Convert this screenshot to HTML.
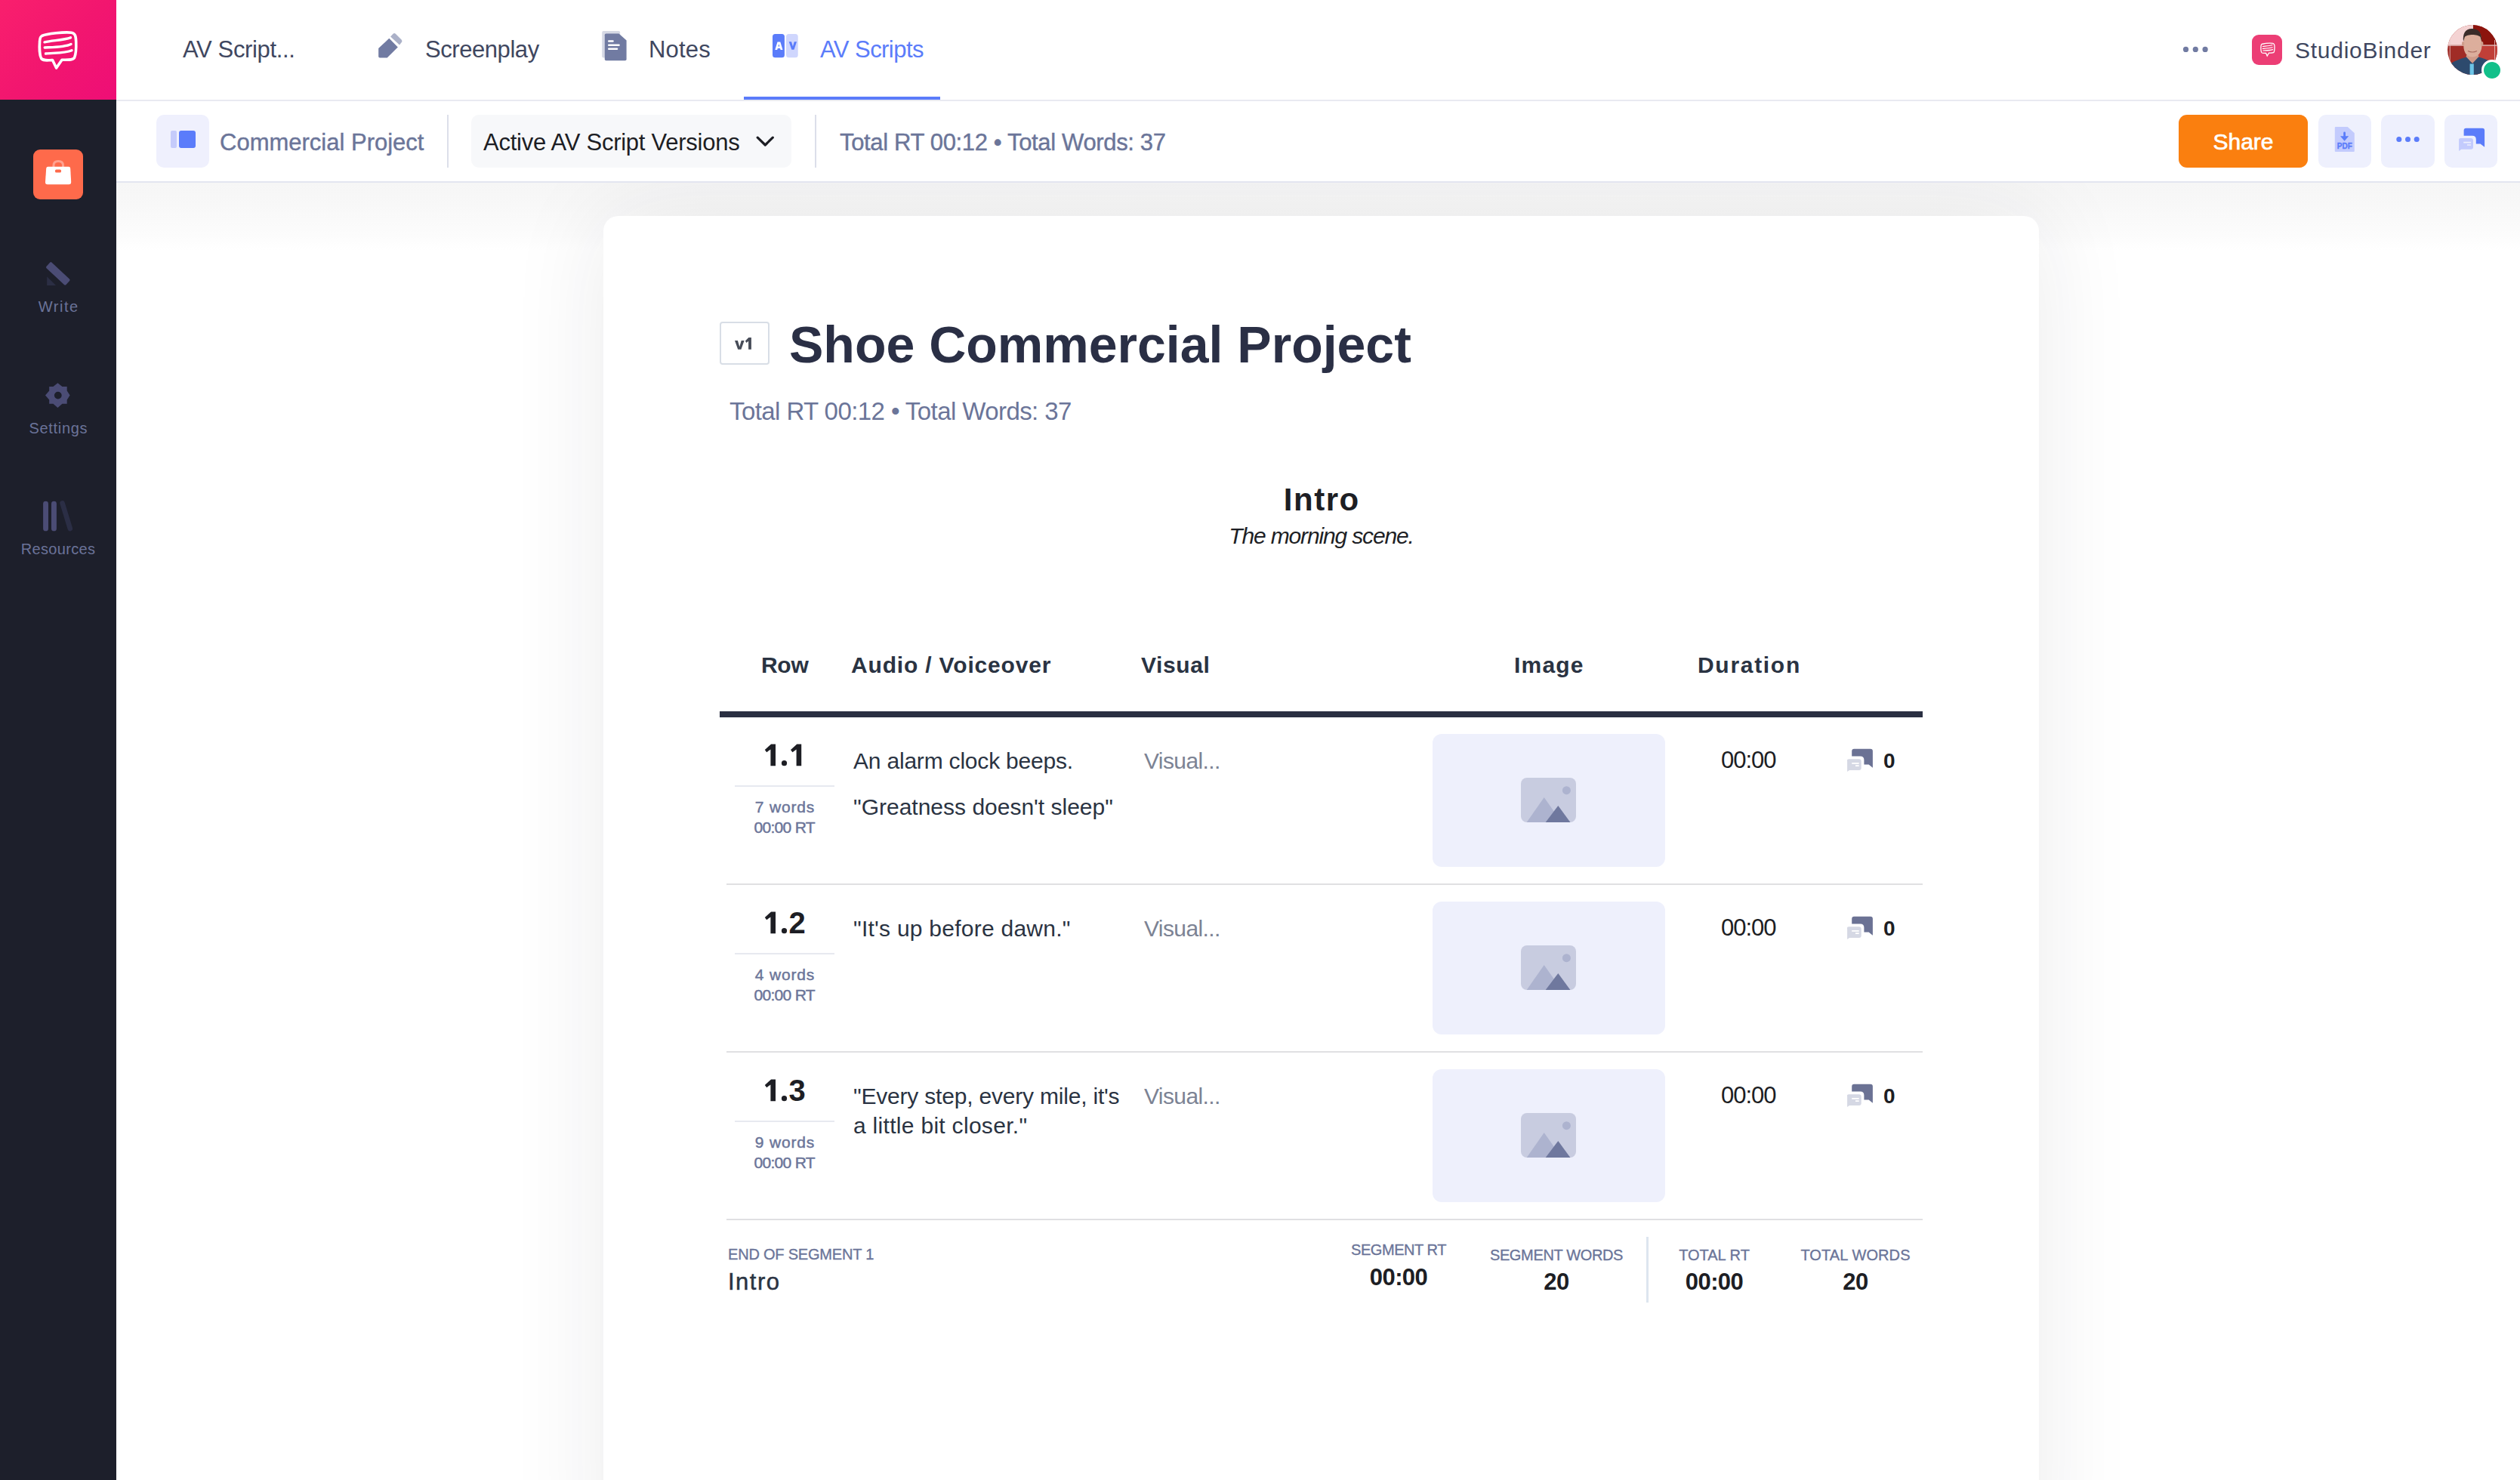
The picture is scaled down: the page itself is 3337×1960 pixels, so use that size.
<!DOCTYPE html>
<html><head><meta charset="utf-8">
<style>
*{margin:0;padding:0;box-sizing:border-box}
html,body{width:3337px;height:1960px;overflow:hidden;background:#fff;font-family:"Liberation Sans",sans-serif}
.a{position:absolute}
.t{position:absolute;white-space:nowrap;line-height:1}
svg{position:absolute;overflow:visible}
#side{left:0;top:0;width:154px;height:1960px;background:#1d1f2b}
#logo{left:0;top:0;width:154px;height:132px;background:linear-gradient(135deg,#f91f6d 0%,#f2166f 50%,#ee0e76 100%)}
.sl{color:#6b7399;font-size:20px;left:0;width:154px;text-align:center}
#top{left:154px;top:0;width:3183px;height:134px;background:#fff;border-bottom:2px solid #e9eaf1}
#bar{left:154px;top:134px;width:3183px;height:108px;background:#fff;border-bottom:2px solid #e3e5f0}
.nav{font-size:31px;color:#3f4760}
.sq{border-radius:10px;background:#eef0fd}
#main{left:154px;top:242px;width:3183px;height:1718px;background:linear-gradient(#f6f6f6 0px,#f8f8f8 30px,#fcfcfc 70px,#fff 90px)}
#card{left:799px;top:286px;width:1901px;height:1800px;background:#fff;border-radius:20px;box-shadow:0 0 130px rgba(30,30,40,0.09)}
.hd{font-size:30px;font-weight:bold;color:#2a3342;letter-spacing:1.2px}
.num{font-size:40px;font-weight:bold;color:#1d1e24;letter-spacing:-1.5px;text-indent:-1.5px}
.wd{font-size:21px;letter-spacing:0.3px;-webkit-text-stroke:0.45px #6b7599;color:#6b7599;width:132px;text-align:center;left:973px}
.au{font-size:30px;color:#2a3342}
.vi{font-size:30px;color:#7c8394;letter-spacing:-0.6px}
.imgbox{left:1897px;width:308px;height:176px;border-radius:12px;background:#eef0fc}
.du{font-size:31px;color:#1d1e24;letter-spacing:-1px}
.zero{font-size:28px;font-weight:bold;color:#1d1e24}
.rdiv{left:962px;width:1584px;height:2px;background:#e0e0e2}
.ndiv{left:973px;width:132px;height:2px;background:#e7e9f0}
.ft{font-size:20px;color:#6b7599;letter-spacing:-0.2px;-webkit-text-stroke:0.35px #6b7599}
.fv{font-size:31px;font-weight:bold;color:#1d1e24;letter-spacing:-0.6px}
</style></head><body>

<!-- MAIN -->
<div id="main" class="a"></div>
<div id="card" class="a"></div>

<!-- SIDEBAR -->
<div id="side" class="a"></div>
<div id="logo" class="a"></div>
<svg style="left:0;top:0" width="154" height="132" viewBox="0 0 154 132">
 <path d="M55.5,47.5 C62,44.5 86,42 94.5,43.2 C99.5,44 100.5,48 100.7,55 C101,63 100.5,72 98.5,76.5 C96.5,79.5 90,79.5 82,79.2 L74.6,90 L69.5,79.5 C62,80 56.5,80.5 54.5,77 C52.5,73 52,62 52.6,54.5 C52.8,50.5 53.5,48.5 55.5,47.5 Z" fill="none" stroke="#fff" stroke-width="3.6" stroke-linejoin="round"/>
 <path d="M59,55.8 C70,53.5 85,53 93.5,49.8" fill="none" stroke="#fff" stroke-width="3.4" stroke-linecap="round"/>
 <path d="M59.2,63 C70,62.5 86,62.5 94,58.5" fill="none" stroke="#fff" stroke-width="3.4" stroke-linecap="round"/>
 <path d="M60.5,71 C71,70 87,70.5 95,66.8" fill="none" stroke="#fff" stroke-width="3.4" stroke-linecap="round"/>
</svg>
<div class="a" style="left:44px;top:198px;width:66px;height:66px;border-radius:9px;background:#fe6a4b"></div>
<svg style="left:0;top:190px" width="154" height="80" viewBox="0 190 154 80">
 <path d="M71,221.5 V219 Q71,213.5 77.2,213.5 Q83.5,213.5 83.5,219 V221.5" fill="none" stroke="#ffa18f" stroke-width="3"/>
 <path d="M63.5,220.8 H91 Q93,220.8 93.2,223 L94.2,241 Q94.3,244.2 91,244.2 H63 Q59.8,244.2 60,241 L61.2,223 Q61.5,220.8 63.5,220.8 Z" fill="#fff"/>
 <rect x="73" y="224.6" width="8" height="4" rx="1.5" fill="#fe6a4b"/>
</svg>
<svg style="left:0;top:330px" width="154" height="60" viewBox="0 330 154 60">
 <rect x="59" y="357.2" width="35.5" height="10.3" rx="1.8" transform="rotate(43 76.8 362.4)" fill="#4b4c75"/>
 <path d="M62.2,366.2 V378 H74 Z" fill="#2b2e44"/>
</svg>
<div class="t sl" style="top:396px;letter-spacing:1.5px;text-indent:1.5px">Write</div>
<svg style="left:0;top:500px" width="154" height="50" viewBox="0 500 154 50">
 <path d="M76.4,507.2 L82.4,512 H88.7 V517.5 L92.6,523.5 L88.7,529.5 V534.8 H82.4 L76.4,540 L70.5,534.8 H65.2 V529.5 L60,523.5 L65.2,517.5 V512 H70.5 Z M76.8,518.7 A4.9,4.9 0 1 0 76.8,528.5 A4.9,4.9 0 1 0 76.8,518.7 Z" fill="#4b4c75" fill-rule="evenodd"/>
</svg>
<div class="t sl" style="top:557px;letter-spacing:0.7px;text-indent:0.7px">Settings</div>
<svg style="left:0;top:655px" width="154" height="55" viewBox="0 655 154 55">
 <rect x="57.1" y="663.8" width="6.9" height="39.5" rx="3.4" fill="#4b4c75"/>
 <rect x="68" y="663.8" width="6.9" height="39.5" rx="3.4" fill="#4b4c75"/>
 <path d="M82.6,666.4 L92.8,700" stroke="#2b2e45" stroke-width="6.6" stroke-linecap="round"/>
</svg>
<div class="t sl" style="top:717px;letter-spacing:0.35px">Resources</div>

<!-- TOP NAV -->
<div id="top" class="a"></div>
<div class="t nav" style="left:242px;top:50px;letter-spacing:-0.36px">AV Script...</div>
<svg style="left:490px;top:35px" width="60" height="60" viewBox="490 35 60 60">
 <path d="M501.2,64 L515.3,50.8 L526.8,62.5 L512.7,76.6 H503 Q501.2,76.6 501.2,74.8 Z" fill="#717ba2"/>
 <path d="M517.1,48.4 L520.6,44.8 Q522.2,43.4 523.8,44.8 L531.8,52.8 Q533.2,54.5 531.8,56.1 L529,59.6 Z" fill="#abb1c8"/>
</svg>
<div class="t nav" style="left:563px;top:50px;letter-spacing:-0.44px">Screenplay</div>
<svg style="left:790px;top:35px" width="50" height="50" viewBox="790 35 50 50">
 <rect x="797.2" y="41" width="24" height="35.6" rx="2" fill="#d6d9e5"/>
 <path d="M802.6,44.4 H819.5 L829.6,53.6 V78.5 Q829.6,80.3 827.8,80.3 H802.6 Q800.8,80.3 800.8,78.5 V46.2 Q800.8,44.4 802.6,44.4 Z" fill="#717ba2"/>
 <path d="M806.3,54.5 H811.5 M806.3,59.8 H819.5 M806.3,64.8 H817" stroke="#fff" stroke-width="2.6" stroke-linecap="round"/>
</svg>
<div class="t nav" style="left:859px;top:50px;letter-spacing:0.2px">Notes</div>
<svg style="left:1015px;top:40px" width="50" height="45" viewBox="1015 40 50 45">
 <rect x="1023" y="44.9" width="15.9" height="31.4" rx="3.5" fill="#5b7cfa"/>
 <rect x="1041" y="44.9" width="15.7" height="31.4" rx="3.5" fill="#cfd6fd"/>
 <path d="M1026.3,66 L1029.5,55.5 H1033.3 L1036.5,66 H1033.6 L1033,64 H1029.8 L1029.2,66 Z M1030.4,61.5 H1032.4 L1031.4,58.2 Z" fill="#fff" fill-rule="evenodd"/>
 <path d="M1044.7,55.2 H1048 L1049.9,61.5 L1051.8,55.2 H1055 L1051.5,65.8 H1048.3 Z" fill="#5b7cfa"/>
</svg>
<div class="t nav" style="left:1086px;top:50px;color:#5b7cfa;letter-spacing:-0.55px">AV Scripts</div>
<div class="a" style="left:985px;top:128px;width:260px;height:4px;background:#5b7cfa"></div>

<svg style="left:2880px;top:55px" width="50" height="20" viewBox="2880 55 50 20">
 <circle cx="2894.5" cy="65.4" r="3.6" fill="#717ba2"/><circle cx="2907.3" cy="65.4" r="3.6" fill="#717ba2"/><circle cx="2920.1" cy="65.4" r="3.6" fill="#717ba2"/>
</svg>
<div class="a" style="left:2982px;top:46px;width:40px;height:40px;border-radius:9px;background:#ec3e75"></div>
<svg style="left:2982px;top:46px" width="40" height="40" viewBox="0 0 40 40">
 <path d="M13,12.5 C17,11.5 24,11 27.5,11.3 C29.5,11.5 30,13 30,16 C30,19 29.8,22 29,23.3 C28,24.3 25.5,24.3 22.5,24.2 L20.2,28 L18.5,24.3 C16,24.5 13.5,24.5 12.8,23.5 C12,22 11.8,18 12,15.3 C12.1,13.5 12.3,12.8 13,12.5 Z" fill="none" stroke="#fff" stroke-width="1.3"/>
 <path d="M14.3,15.5 C18,15 23,15 27,13.5 M14.3,18.3 C18,18.2 23,18.2 27.2,16.8 M14.8,21 C18.5,20.8 23.5,21 27.5,19.6" stroke="#fff" stroke-width="1.2" fill="none" stroke-linecap="round"/>
</svg>
<div class="t" style="left:3039px;top:51.5px;font-size:30px;color:#3f4760;letter-spacing:0.73px">StudioBinder</div>
<svg style="left:3241px;top:33px" width="66" height="66" viewBox="0 0 66 66">
 <defs><clipPath id="avc"><circle cx="33" cy="33" r="33"/></clipPath></defs>
 <g clip-path="url(#avc)">
  <rect x="0" y="0" width="66" height="66" fill="#a02c26"/>
  <rect x="0" y="0" width="33" height="26.5" fill="#f4d3d3"/>
  <rect x="33.8" y="0" width="33" height="26.5" fill="#8c140d"/>
  <rect x="33.8" y="27.6" width="33" height="40" fill="#c03f38"/>
  <rect x="33" y="0" width="0.9" height="66" fill="#f0e0e0"/>
  <rect x="0" y="26.5" width="66" height="1.1" fill="#f0e0e0"/>
  <rect x="2.8" y="20" width="0.8" height="40" fill="#e8c8c8"/>
  <rect x="62" y="20" width="0.8" height="40" fill="#e8c8c8"/>
  <path d="M25,40 L41,40 L43,50 L24,50 Z" fill="#cf9a88"/>
  <path d="M21.5,20 C21,12 24,6.5 32.5,6 C41,6 45,11 45,20 L45.5,28 C45,37 40,42.5 33,42.5 C26,42.5 21.5,37 21.3,28 Z" fill="#dcae9c"/>
  <path d="M21,22 C20,12 23,5 32.5,5 C42,5 45.5,11 45.2,22 L43.5,16 C40,12 26,12 22.8,16 Z" fill="#3b2c29"/>
  <ellipse cx="20.6" cy="25" rx="1.6" ry="3" fill="#cf9d8b"/>
  <ellipse cx="45.8" cy="25" rx="1.6" ry="3" fill="#cf9d8b"/>
  <path d="M27,34.5 Q33,37.5 39,34.5" stroke="#a86a5e" stroke-width="1.2" fill="none"/>
  <path d="M3,52 C10,47 20,44 25,42.5 L33,51 L41,42.5 C47,44 53,46 58,49 L66,66 H0 Z" fill="#2d4a6d"/>
  <rect x="29.6" y="51.5" width="5.2" height="16" fill="#6cc4e6"/>
 </g>
</svg>
<div class="a" style="left:3286px;top:78.5px;width:28px;height:28px;border-radius:50%;background:#12c08a;border:3px solid #fff"></div>

<!-- SECOND BAR -->
<div id="bar" class="a"></div>
<div class="a sq" style="left:207px;top:152px;width:70px;height:70px;background:#eff0fd"></div>
<div class="a" style="left:225.7px;top:173px;width:8px;height:23px;border-radius:2px;background:#c5cbfb"></div>
<div class="a" style="left:237.3px;top:173px;width:21.4px;height:23px;border-radius:3px;background:#5b7cfa"></div>
<div class="t" style="left:291px;top:172.6px;font-size:31px;color:#6b7599;-webkit-text-stroke:0.4px #6b7599">Commercial Project</div>
<div class="a" style="left:592px;top:152px;width:2px;height:70px;background:#dcdfea"></div>
<div class="a" style="left:624px;top:152px;width:424px;height:70px;border-radius:10px;background:#f7f8fa"></div>
<div class="t" style="left:640px;top:172.6px;font-size:31px;color:#1d1e24;letter-spacing:-0.25px">Active AV Script Versions</div>
<svg style="left:995px;top:175px" width="40" height="25" viewBox="995 175 40 25">
 <path d="M1003.2,182.2 L1013.3,192 L1023.3,182.2" fill="none" stroke="#1d1e24" stroke-width="3.2" stroke-linecap="round" stroke-linejoin="round"/>
</svg>
<div class="a" style="left:1079px;top:152px;width:2px;height:70px;background:#dcdfea"></div>
<div class="t" style="left:1112px;top:172.6px;font-size:31px;color:#6b7599;letter-spacing:-0.35px;-webkit-text-stroke:0.4px #6b7599">Total RT 00:12 • Total Words: 37</div>

<div class="a" style="left:2885px;top:152px;width:171px;height:70px;border-radius:11px;background:#fa7f0f"></div>
<div class="t" style="left:2885px;width:171px;text-align:center;top:173px;font-size:30px;color:#fff;-webkit-text-stroke:0.7px #fff">Share</div>
<div class="a sq" style="left:3070px;top:152px;width:70px;height:70px"></div>
<div class="a sq" style="left:3153px;top:152px;width:71px;height:70px"></div>
<div class="a sq" style="left:3237px;top:152px;width:70px;height:70px"></div>
<svg style="left:3080px;top:160px" width="50" height="50" viewBox="3080 160 50 50">
 <path d="M3092.8,168.1 H3108.7 L3117.8,176.2 V199.9 Q3117.8,200.9 3116.8,200.9 H3092.8 Q3091.8,200.9 3091.8,199.9 V169.1 Q3091.8,168.1 3092.8,168.1 Z" fill="#c3cbfd"/>
 <path d="M3104.6,176 V181" stroke="#5b7cfa" stroke-width="2.8" stroke-linecap="round"/>
 <path d="M3099,180.3 H3110.2 L3104.6,186.8 Z" fill="#5b7cfa"/>
 <text x="3104.8" y="196.8" font-family="Liberation Sans" font-weight="bold" font-size="10" fill="#5b7cfa" stroke="#5b7cfa" stroke-width="0.35" text-anchor="middle">PDF</text>
</svg>
<svg style="left:3170px;top:175px" width="40" height="20" viewBox="3170 175 40 20">
 <circle cx="3176.8" cy="184.6" r="3.5" fill="#5b7cfa"/><circle cx="3188.5" cy="184.6" r="3.5" fill="#5b7cfa"/><circle cx="3200.2" cy="184.6" r="3.5" fill="#5b7cfa"/>
</svg>
<svg style="left:3245px;top:160px" width="50" height="50" viewBox="3245 160 50 50">
 <path d="M3265.6,169.8 H3287.1 Q3290.1,169.8 3290.1,172.8 V194.8 L3284.5,190.4 H3278.8 V184.8 Q3278.8,179.8 3273.8,179.8 H3262.6 V172.8 Q3262.6,169.8 3265.6,169.8 Z" fill="#5b7cfa"/>
 <path d="M3258.6,183.1 H3272 Q3275,183.1 3275,186.1 V194.7 Q3275,197.7 3272,197.7 H3259.3 L3256.1,199.9 V186.1 Q3255.6,183.1 3258.6,183.1 Z" fill="#c3cbfd"/>
 <path d="M3262.2,188.7 H3272 M3267,192 H3272" stroke="#eef0fc" stroke-width="1.7"/>
</svg>


<div class="a" style="left:953px;top:426px;width:66px;height:57px;border:2px solid #d8dee6;border-radius:4px"></div>
<svg style="left:960px;top:440px" width="50" height="30" viewBox="960 440 50 30">
 <path d="M973,451 H976.9 L979.3,459.3 L981.7,451 H985.6 L981.4,462.7 H977.2 Z" fill="#474c58"/>
 <path d="M991.3,447 H994.9 V462.7 H991.1 V451.8 L988.4,453.9 L986.9,451.6 Z" fill="#474c58"/>
</svg>
<div class="t" style="left:1045px;top:421.8px;font-size:68px;font-weight:bold;color:#2a2f45">Shoe Commercial Project</div>
<div class="t" style="left:966px;top:528.4px;font-size:33px;color:#6b7599;letter-spacing:-0.58px">Total RT 00:12 • Total Words: 37</div>

<div class="t" style="left:1549.5px;width:400px;text-align:center;top:640.5px;font-size:42px;font-weight:bold;color:#1d1e24;letter-spacing:1.5px;text-indent:1.5px">Intro</div>
<div class="t" style="left:1549.5px;width:400px;text-align:center;top:695px;font-size:30px;font-style:italic;color:#1e1f25;letter-spacing:-1.15px">The morning scene.</div>

<div class="t hd" style="left:1008px;top:866.4px;letter-spacing:-0.3px">Row</div>
<div class="t hd" style="left:1127px;top:866.4px;letter-spacing:0.83px">Audio / Voiceover</div>
<div class="t hd" style="left:1511px;top:866.4px;letter-spacing:0.6px">Visual</div>
<div class="t hd" style="left:2005px;top:866.4px">Image</div>
<div class="t hd" style="left:2248px;top:866.4px;letter-spacing:1.7px">Duration</div>
<div class="a" style="left:953px;top:942px;width:1593px;height:8px;background:#2a2f42"></div>

<svg style="left:1000px;top:981px" width="80" height="40" viewBox="1000 981 80 40">
 <path d="M1021.1,985.6 H1027.0 V1014.2 H1020.4 V992.4 L1015.2,996.2 L1012.8,992.9 Z" fill="#1d1e24"/>
 <circle cx="1038.5" cy="1010.7" r="3.6" fill="#1d1e24"/>
 <path d="M1055.3,985.6 H1061.2 V1014.2 H1054.6 V992.4 L1049.4,996.2 L1047.0,992.9 Z" fill="#1d1e24"/>
</svg>

<div class="a ndiv" style="top:1040px"></div>
<div class="t wd" style="top:1057.8px;letter-spacing:0.8px;text-indent:0.8px">7 words</div>
<div class="t wd" style="top:1085.3px;letter-spacing:-0.7px;text-indent:-0.7px">00:00 RT</div>
<div class="t au" style="left:1130px;top:992.9px;letter-spacing:-0.2px">An alarm clock beeps.</div>
<div class="t au" style="left:1130px;top:1053.9px">"Greatness doesn't sleep"</div>
<div class="t vi" style="left:1515px;top:992.9px">Visual...</div>
<div class="a imgbox" style="top:972px"></div>
<svg style="left:2010px;top:1025px" width="80" height="70" viewBox="2010 1025 80 70">
 <rect x="2014" y="1030" width="73" height="59" rx="8" fill="#c8cce0"/>
 <circle cx="2074.4" cy="1046.7" r="5.5" fill="#adb3cf"/>
 <path d="M2021.7,1089 L2044.7,1056 L2068,1089 Z" fill="#adb3cf"/>
 <path d="M2046.7,1089 L2063.3,1067 L2079.4,1089 Z" fill="#6f789e"/>
</svg>
<div class="t du" style="left:2279px;top:990.6px">00:00</div>
<svg style="left:2440px;top:985px" width="45" height="45" viewBox="2440 985 45 45">
 <path d="M2455.2,991.8 H2476.9 Q2479.9,991.8 2479.9,994.8 V1016.8 L2474.6,1012.4 H2468.4 V1006.6 Q2468.4,1001.6 2463.4,1001.6 H2452.2 V994.8 Q2452.2,991.8 2455.2,991.8 Z" fill="#6b7294"/>
 <path d="M2448.3,1005.2 H2461.7 Q2464.7,1005.2 2464.7,1008.2 V1016.9 Q2464.7,1019.9 2461.7,1019.9 H2449 L2446.1,1021.9 V1008.2 Q2445.3,1005.2 2448.3,1005.2 Z" fill="#d5d8e4"/>
 <path d="M2452.2,1010.8 H2461.7 M2457,1014.1 H2461.7" stroke="#fff" stroke-width="1.8"/>
</svg>
<div class="t zero" style="left:2494px;top:993.7px">0</div>
<div class="a rdiv" style="top:1170px"></div>

<svg style="left:1000px;top:1203px" width="80" height="40" viewBox="1000 1203 80 40">
 <path d="M1021.1,1207.6 H1027.0 V1236.2 H1020.4 V1214.4 L1015.2,1218.2 L1012.8,1214.9 Z" fill="#1d1e24"/>
 <circle cx="1038.5" cy="1232.7" r="3.6" fill="#1d1e24"/>
</svg>
<div class="t num" style="left:1044.5px;top:1201.8px;letter-spacing:0;text-indent:0">2</div>

<div class="a ndiv" style="top:1262px"></div>
<div class="t wd" style="top:1279.8px;letter-spacing:0.8px;text-indent:0.8px">4 words</div>
<div class="t wd" style="top:1307.3px;letter-spacing:-0.7px;text-indent:-0.7px">00:00 RT</div>
<div class="t au" style="left:1130px;top:1214.9px;line-height:39px;margin-top:-4.5px;letter-spacing:0.25px">"It's up before dawn."</div>
<div class="t vi" style="left:1515px;top:1214.9px">Visual...</div>
<div class="a imgbox" style="top:1194px"></div>
<svg style="left:2010px;top:1247px" width="80" height="70" viewBox="2010 1025 80 70">
 <rect x="2014" y="1030" width="73" height="59" rx="8" fill="#c8cce0"/>
 <circle cx="2074.4" cy="1046.7" r="5.5" fill="#adb3cf"/>
 <path d="M2021.7,1089 L2044.7,1056 L2068,1089 Z" fill="#adb3cf"/>
 <path d="M2046.7,1089 L2063.3,1067 L2079.4,1089 Z" fill="#6f789e"/>
</svg>
<div class="t du" style="left:2279px;top:1212.6px">00:00</div>
<svg style="left:2440px;top:1207px" width="45" height="45" viewBox="2440 985 45 45">
 <path d="M2455.2,991.8 H2476.9 Q2479.9,991.8 2479.9,994.8 V1016.8 L2474.6,1012.4 H2468.4 V1006.6 Q2468.4,1001.6 2463.4,1001.6 H2452.2 V994.8 Q2452.2,991.8 2455.2,991.8 Z" fill="#6b7294"/>
 <path d="M2448.3,1005.2 H2461.7 Q2464.7,1005.2 2464.7,1008.2 V1016.9 Q2464.7,1019.9 2461.7,1019.9 H2449 L2446.1,1021.9 V1008.2 Q2445.3,1005.2 2448.3,1005.2 Z" fill="#d5d8e4"/>
 <path d="M2452.2,1010.8 H2461.7 M2457,1014.1 H2461.7" stroke="#fff" stroke-width="1.8"/>
</svg>
<div class="t zero" style="left:2494px;top:1215.7px">0</div>
<div class="a rdiv" style="top:1392px"></div>

<svg style="left:1000px;top:1425px" width="80" height="40" viewBox="1000 1425 80 40">
 <path d="M1021.1,1429.6 H1027.0 V1458.2 H1020.4 V1436.4 L1015.2,1440.2 L1012.8,1436.9 Z" fill="#1d1e24"/>
 <circle cx="1038.5" cy="1454.7" r="3.6" fill="#1d1e24"/>
</svg>
<div class="t num" style="left:1044.5px;top:1423.8px;letter-spacing:0;text-indent:0">3</div>

<div class="a ndiv" style="top:1484px"></div>
<div class="t wd" style="top:1501.8px;letter-spacing:0.8px;text-indent:0.8px">9 words</div>
<div class="t wd" style="top:1529.3px;letter-spacing:-0.7px;text-indent:-0.7px">00:00 RT</div>
<div class="t au" style="left:1130px;top:1436.9px;letter-spacing:-0.2px">"Every step, every mile, it's</div>
<div class="t au" style="left:1130px;top:1475.9px;letter-spacing:0.3px">a little bit closer."</div>
<div class="t vi" style="left:1515px;top:1436.9px">Visual...</div>
<div class="a imgbox" style="top:1416px"></div>
<svg style="left:2010px;top:1469px" width="80" height="70" viewBox="2010 1025 80 70">
 <rect x="2014" y="1030" width="73" height="59" rx="8" fill="#c8cce0"/>
 <circle cx="2074.4" cy="1046.7" r="5.5" fill="#adb3cf"/>
 <path d="M2021.7,1089 L2044.7,1056 L2068,1089 Z" fill="#adb3cf"/>
 <path d="M2046.7,1089 L2063.3,1067 L2079.4,1089 Z" fill="#6f789e"/>
</svg>
<div class="t du" style="left:2279px;top:1434.6px">00:00</div>
<svg style="left:2440px;top:1429px" width="45" height="45" viewBox="2440 985 45 45">
 <path d="M2455.2,991.8 H2476.9 Q2479.9,991.8 2479.9,994.8 V1016.8 L2474.6,1012.4 H2468.4 V1006.6 Q2468.4,1001.6 2463.4,1001.6 H2452.2 V994.8 Q2452.2,991.8 2455.2,991.8 Z" fill="#6b7294"/>
 <path d="M2448.3,1005.2 H2461.7 Q2464.7,1005.2 2464.7,1008.2 V1016.9 Q2464.7,1019.9 2461.7,1019.9 H2449 L2446.1,1021.9 V1008.2 Q2445.3,1005.2 2448.3,1005.2 Z" fill="#d5d8e4"/>
 <path d="M2452.2,1010.8 H2461.7 M2457,1014.1 H2461.7" stroke="#fff" stroke-width="1.8"/>
</svg>
<div class="t zero" style="left:2494px;top:1437.7px">0</div>
<div class="a rdiv" style="top:1614px"></div>

<div class="t ft" style="left:964px;top:1651.2px">END OF SEGMENT 1</div>
<div class="t" style="left:964px;top:1681.6px;font-size:31px;color:#2a3342;letter-spacing:1.5px;-webkit-text-stroke:0.5px #2a3342">Intro</div>
<div class="t ft" style="left:1752px;width:200px;text-align:center;top:1645px;letter-spacing:-0.45px">SEGMENT RT</div>
<div class="t fv" style="left:1752px;width:200px;text-align:center;top:1675.6px">00:00</div>
<div class="t ft" style="left:1961px;width:200px;text-align:center;top:1651.6px;letter-spacing:-0.35px">SEGMENT WORDS</div>
<div class="t fv" style="left:1961px;width:200px;text-align:center;top:1681.6px">20</div>
<div class="a" style="left:2180px;top:1638px;width:3px;height:87px;background:#dde5ef"></div>
<div class="t ft" style="left:2170px;width:200px;text-align:center;top:1651.6px;letter-spacing:0px">TOTAL RT</div>
<div class="t fv" style="left:2170px;width:200px;text-align:center;top:1681.6px">00:00</div>
<div class="t ft" style="left:2357px;width:200px;text-align:center;top:1651.6px;letter-spacing:0.1px">TOTAL WORDS</div>
<div class="t fv" style="left:2357px;width:200px;text-align:center;top:1681.6px">20</div>
</body></html>
